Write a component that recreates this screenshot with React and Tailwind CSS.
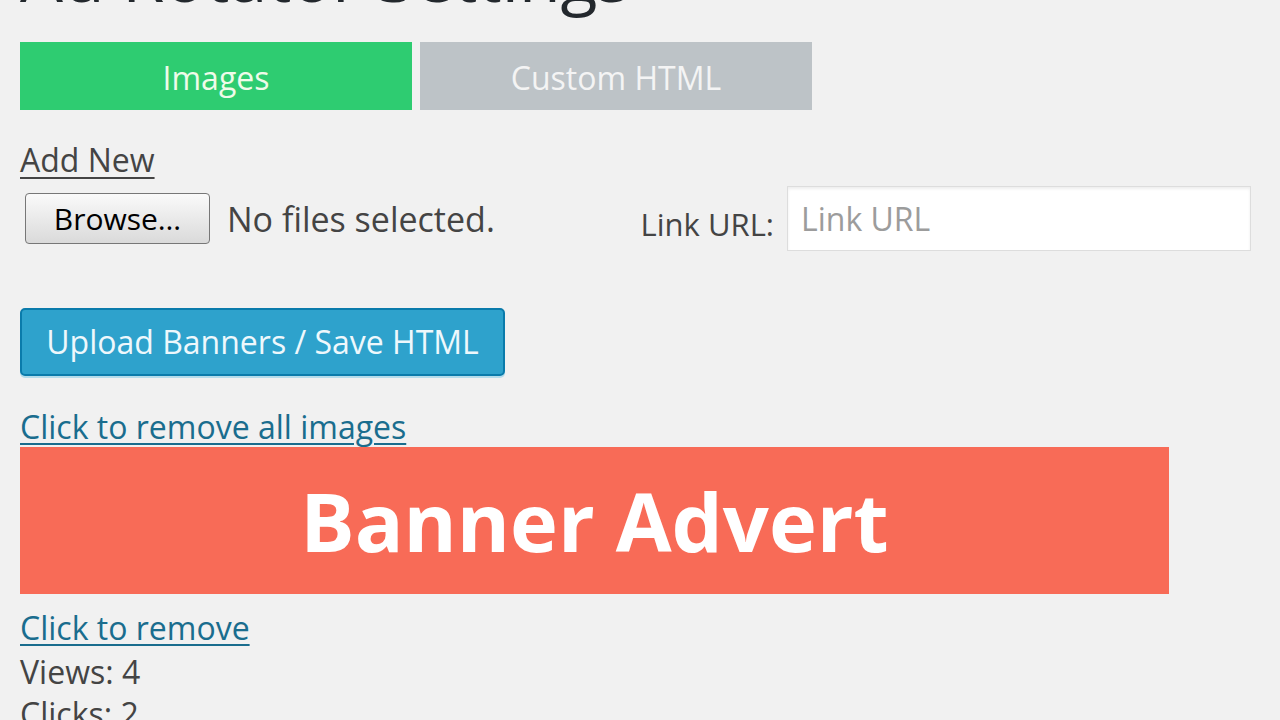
import React from "react";

export default function App() {
  return (
    <main className="min-h-screen w-full overflow-hidden bg-[#f1f1f1] pl-[20px] font-['Open_Sans',sans-serif] text-[#333]">
      {/* Page title, mostly scrolled out of view */}
      <h2 className="-mt-[56px] h-[64px] text-[68px] leading-[64px] font-normal text-[#23282d] whitespace-nowrap">
        Ad Rotator Settings
      </h2>

      {/* Tabs */}
      <div className="mt-[34px] flex gap-[8px]">
        <button className="h-[68px] w-[392px] pt-[3px] bg-[#2ecc71] text-[32px] text-[#effbe9]">Images</button>
        <button className="h-[68px] w-[392px] pt-[3px] bg-[#bdc3c7] text-[32px] text-[#f4f4f4]">Custom HTML</button>
      </div>

      <a href="#" className="mt-[30px] block w-fit text-[32px] leading-[40px] text-[#444] underline decoration-[2px] underline-offset-[5px]">
        Add New
      </a>

      {/* File + link row */}
      <div className="mt-[6px] flex w-[1231px] items-center">
        <div className="flex items-center">
          <button className="ml-[5px] h-[51px] w-[185px] rounded-[4px] border border-[#777] bg-gradient-to-b from-[#fafafa] to-[#dadada] text-[30px] text-black">
            Browse…
          </button>
          <span className="ml-[17px] text-[34px] leading-[40px] text-[#444]">No files selected.</span>
        </div>
        <div className="flex-1" />
        <label className="mt-[10px] text-[31px] leading-[40px] text-[#444]">Link URL:</label>
        <input
          type="text"
          placeholder="Link URL"
          className="ml-[13px] h-[65px] w-[464px] border border-[#ddd] bg-white pl-[13px] text-[32px] text-[#333] shadow-[inset_0_2px_3px_rgba(0,0,0,0.07)] placeholder:text-[#9c9c9c] outline-none"
        />
      </div>

      <button className="mt-[57px] h-[68px] w-[485px] rounded-[5px] border-2 border-[#0a7bab] bg-[#2ea2cc] text-[32px] text-[#eef8fc] shadow-[0_2px_0_rgba(120,200,230,0.5)]">
        Upload Banners / Save HTML
      </button>

      <a href="#" className="mt-[31px] block w-fit text-[32px] leading-[40px] text-[#1a6d8e] underline decoration-[2px] underline-offset-[4px]">
        Click to remove all images
      </a>

      {/* Banner image */}
      <div className="flex h-[147px] w-[1149px] items-center justify-center bg-[#f86b57]">
        <span className="text-[81px] font-bold leading-none text-white">Banner Advert</span>
      </div>

      <a href="#" className="mt-[13px] block w-fit text-[32px] leading-[42px] text-[#1a6d8e] underline decoration-[2px] underline-offset-[4px]">
        Click to remove
      </a>
      <p className="mt-[2px] text-[32px] leading-[42px] text-[#444]">Views: 4</p>
      <p className="text-[32px] leading-[42px] text-[#444]">Clicks: 2</p>
    </main>
  );
}
